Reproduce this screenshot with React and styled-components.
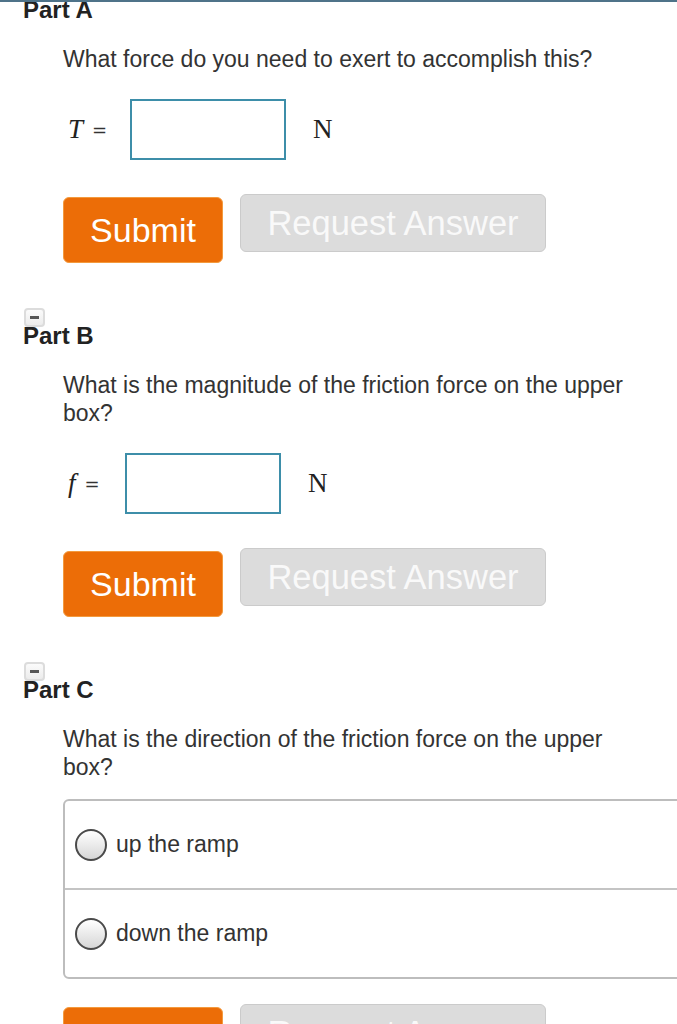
import React from "react";
import styled, { createGlobalStyle } from "styled-components";

const Global = createGlobalStyle`
  html, body {
    margin: 0;
    padding: 0;
    background: #fff;
    overflow-x: hidden;
  }
  body {
    font-family: "Liberation Sans", Arial, sans-serif;
    color: #333;
  }
`;

const parts = [
  {
    title: "Part A",
    question: "What force do you need to exert to accomplish this?",
    symbol: "T",
    labelWidth: 62,
  },
  {
    title: "Part B",
    question: "What is the magnitude of the friction force on the upper box?",
    symbol: "f",
    labelWidth: 57,
  },
  {
    title: "Part C",
    question: "What is the direction of the friction force on the upper box?",
    choices: ["up the ramp", "down the ramp"],
  },
];

const App = () => {
  return (
    <>
      <Global />
      <TopRule />
      <Page>
        {parts.map((p) => (
          <Part key={p.title}>
            <Toggle>
              <Dash />
            </Toggle>
            <PartTitle>{p.title}</PartTitle>
            <Body>
              <Question>{p.question}</Question>
              {p.choices ? (
                <Choices>
                  {p.choices.map((c) => (
                    <Choice key={c}>
                      <Radio />
                      <ChoiceLabel>{c}</ChoiceLabel>
                    </Choice>
                  ))}
                </Choices>
              ) : (
                <AnswerRow>
                  <MathLabel $width={p.labelWidth}>
                    <Var>{p.symbol}</Var>
                    <Equals>=</Equals>
                  </MathLabel>
                  <AnswerBox />
                  <Unit>N</Unit>
                </AnswerRow>
              )}
              <Actions>
                <SubmitButton>Submit</SubmitButton>
                <RequestButton>Request Answer</RequestButton>
              </Actions>
            </Body>
          </Part>
        ))}
      </Page>
    </>
  );
};

export default App;

const TopRule = styled.div`
  position: fixed;
  top: 0;
  left: 0;
  right: 0;
  height: 2px;
  background: #4f7389;
  z-index: 5;
`;

const Page = styled.div`
  margin-top: -18px;
  padding-left: 23px;
`;

const Part = styled.section`
  padding-bottom: 45px;
`;

const Toggle = styled.div`
  width: 21px;
  height: 19px;
  margin-left: 1px;
  margin-bottom: -5px;
  box-sizing: border-box;
  border: 2px solid #dcdcdc;
  border-radius: 4px;
  background: linear-gradient(#fbfbfb, #ececec);
  display: flex;
  justify-content: center;
  padding-top: 6px;
`;

const Dash = styled.div`
  width: 9px;
  height: 3px;
  background: #555;
`;

const PartTitle = styled.h2`
  margin: 0;
  font-size: 24px;
  line-height: 28px;
  font-weight: bold;
  color: #222;
`;

const Body = styled.div`
  padding-left: 40px;
`;

const Question = styled.p`
  margin: 21px 0 0;
  font-size: 23px;
  line-height: 28px;
  color: #333;
  padding-right: 40px;
`;

const AnswerRow = styled.div`
  display: flex;
  align-items: center;
  margin-top: 26px;
  margin-bottom: 34px;
  padding-left: 5px;
`;

const MathLabel = styled.div`
  width: ${(p) => p.$width}px;
  display: flex;
  align-items: center;
  gap: 9px;
`;

const Var = styled.span`
  font-family: "Liberation Serif", "Times New Roman", serif;
  font-style: italic;
  font-size: 27px;
  color: #222;
`;

const Equals = styled.span`
  font-family: "DejaVu Sans", sans-serif;
  font-size: 18px;
  color: #333;
`;

const AnswerBox = styled.div`
  width: 156px;
  height: 61px;
  box-sizing: border-box;
  border: 2px solid #3d8ea9;
  background: #fff;
`;

const Unit = styled.span`
  margin-left: 27px;
  font-family: "Liberation Serif", "Times New Roman", serif;
  font-size: 27px;
  color: #222;
`;

const Actions = styled.div`
  display: flex;
  align-items: flex-start;
  gap: 17px;
`;

const SubmitButton = styled.button`
  margin-top: 3px;
  width: 160px;
  height: 66px;
  border: 1px solid #f39a3e;
  border-radius: 6px;
  background: #ec6d07;
  color: #fff;
  font-family: "Liberation Sans", Arial, sans-serif;
  font-size: 34px;
  padding: 0;
`;

const RequestButton = styled.button`
  width: 306px;
  height: 58px;
  border: 1px solid #cbcbcb;
  border-radius: 6px;
  background: #dcdcdc;
  color: #f9f9f9;
  font-family: "Liberation Sans", Arial, sans-serif;
  font-size: 34.5px;
  padding: 0;
`;

const Choices = styled.div`
  margin-top: 18px;
  margin-bottom: 25px;
  margin-right: -12px;
  border: 2px solid #bdbdbd;
  border-radius: 6px;
`;

const Choice = styled.label`
  display: flex;
  align-items: center;
  gap: 9px;
  height: 87px;
  padding-left: 10px;
  & + & {
    border-top: 2px solid #c4c4c4;
  }
`;

const Radio = styled.span`
  width: 32px;
  height: 32px;
  box-sizing: border-box;
  border-radius: 50%;
  border: 2px solid #4a4a4a;
  background: linear-gradient(#ffffff, #d6d6d6);
`;

const ChoiceLabel = styled.span`
  font-size: 23px;
  color: #333;
`;
